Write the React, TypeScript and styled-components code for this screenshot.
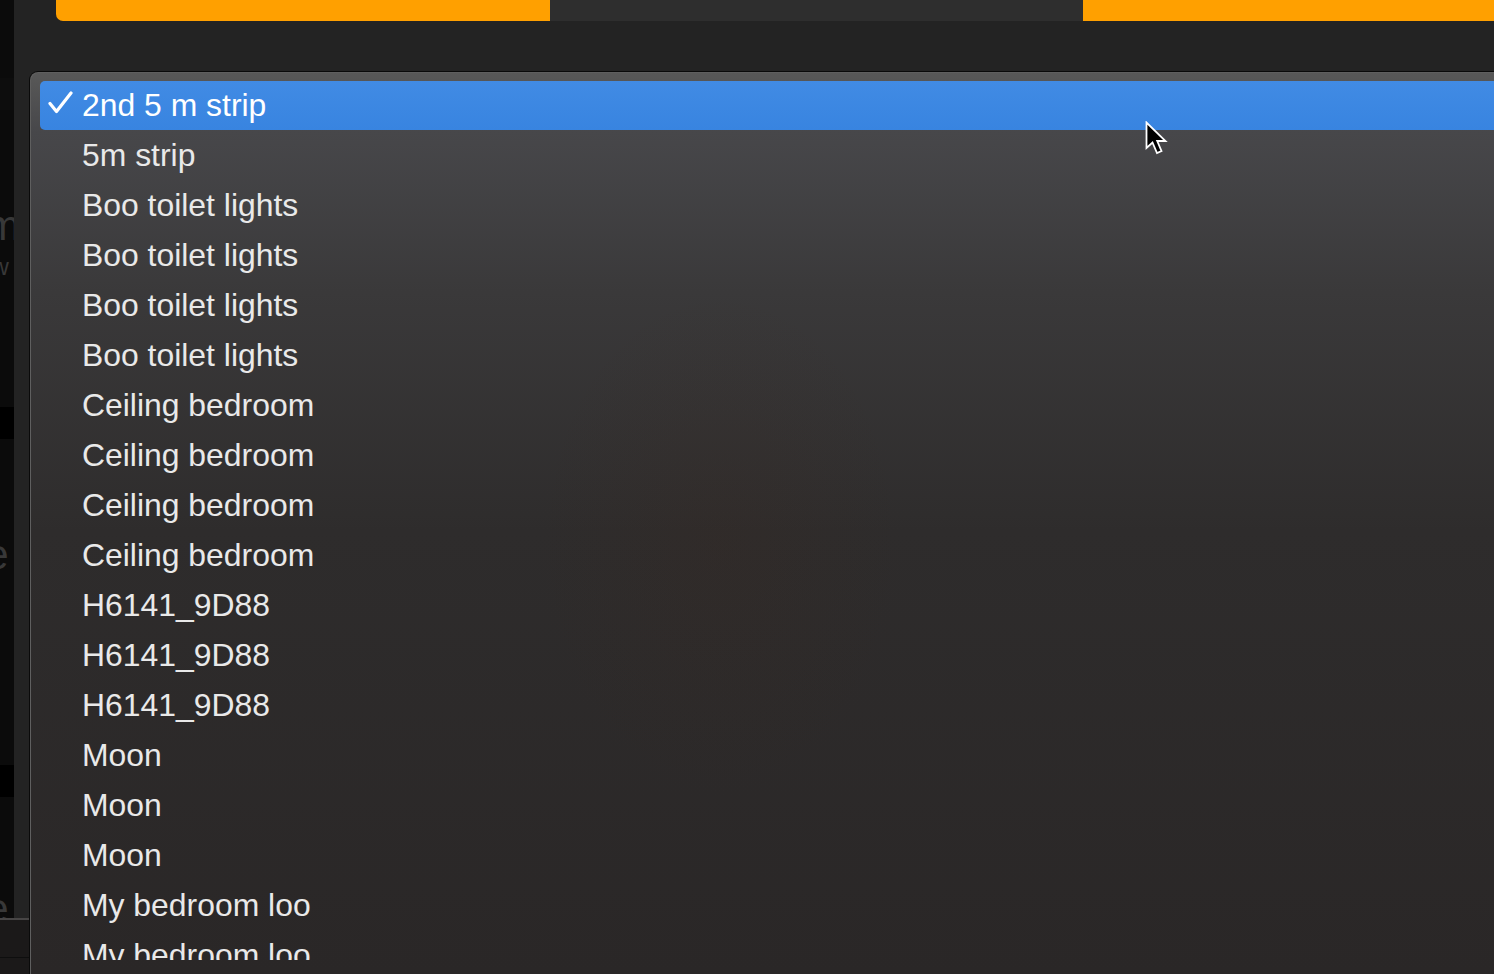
import React from "react";
import styled, { createGlobalStyle } from "styled-components";

const Global = createGlobalStyle`
  html, body { margin: 0; padding: 0; background: #232323; overflow: hidden; }
  body { font-family: "Liberation Sans", Arial, sans-serif; }
`;

const Page = styled.div`
  position: relative;
  display: flex;
  width: 1494px;
  height: 974px;
  background: #232323;
  overflow: hidden;
`;

const Rail = styled.div`
  width: 14px;
  flex: none;
  display: flex;
  flex-direction: column;
  background: #0b0b0b;
  overflow: hidden;
`;

const RailBlock = styled.div<{ $h: number; $bg: string }>`
  height: ${(p) => p.$h}px;
  flex: none;
  background: ${(p) => p.$bg};
  overflow: hidden;
  display: flex;
  align-items: center;
`;

const Ghost = styled.span<{ $size: number }>`
  font-size: ${(p) => p.$size}px;
  color: #383838;
  line-height: 1;
  margin-left: -${(p) => p.$size * 0.35}px;
`;

const Main = styled.div`
  flex: 1;
  display: flex;
  flex-direction: column;
  min-width: 0;
`;

const TopBar = styled.div`
  height: 21px;
  flex: none;
  display: grid;
  grid-template-columns: 494px 533px 1fr;
  padding-left: 42px;
`;

const Segment = styled.div<{ $on?: boolean; $first?: boolean }>`
  background: ${(p) => (p.$on ? "#ffa000" : "#2e2e2e")};
  border-bottom-left-radius: ${(p) => (p.$first ? "7px" : "0")};
`;

const Gap = styled.div`
  height: 50px;
  flex: none;
`;

const Lower = styled.div`
  flex: 1;
  display: flex;
  min-height: 0;
`;

const Gutter = styled.div`
  width: 15px;
  flex: none;
  display: flex;
  flex-direction: column;
`;

const GutterFill = styled.div`
  flex: 1;
`;

const GutterFoot = styled.div`
  height: 54px;
  flex: none;
  margin-left: -14px;
  border-top: 2px solid #474545;
  background: #1b1919;
  box-shadow: inset 0 37px 0 #1b1919, inset 0 38px 0 #0e0e0e;
`;

const Menu = styled.div`
  flex: 1;
  margin-right: -30px;
  border: 1px solid #0a0a0a;
  border-bottom: none;
  border-radius: 9px 9px 0 0;
  box-shadow: inset 1px 1px 0 #5f5f5f, inset -1px 0 0 #5f5f5f;
  background:
    radial-gradient(ellipse 260px 360px at 690px 470px, rgba(60, 40, 30, 0.18), transparent 70%),
    linear-gradient(180deg, #585858 0px, #565656 9px, #47474a 60px, #3a393a 220px, #2e2c2c 460px, #2a2727 903px);
  padding: 9px 0 0 10px;
  display: flex;
  flex-direction: column;
  overflow: hidden;
`;

const List = styled.div`
  height: 879px;
  overflow: hidden;
  display: flex;
  flex-direction: column;
`;

const Row = styled.div<{ $active?: boolean }>`
  height: ${(p) => (p.$active ? 49 : 50)}px;
  margin-bottom: ${(p) => (p.$active ? 1 : 0)}px;
  flex: none;
  display: flex;
  align-items: center;
  position: relative;
  padding-left: 42px;
  padding-bottom: 1px;
  box-sizing: border-box;
  border-radius: 5px 0 0 5px;
  background: ${(p) => (p.$active ? "linear-gradient(180deg, #418be4, #3884e0)" : "transparent")};
  color: ${(p) => (p.$active ? "#ffffff" : "#e9e9e9")};
  font-size: 31.9px;
  white-space: nowrap;
`;

const Check = styled.svg`
  position: absolute;
  left: 8px;
  top: 10px;
  width: 25px;
  height: 24px;
`;

const Pointer = styled.svg`
  position: absolute;
  left: 1145px;
  top: 121px;
  width: 24px;
  height: 38px;
`;

const items = [
  "2nd 5 m strip",
  "5m strip",
  "Boo toilet lights",
  "Boo toilet lights",
  "Boo toilet lights",
  "Boo toilet lights",
  "Ceiling bedroom",
  "Ceiling bedroom",
  "Ceiling bedroom",
  "Ceiling bedroom",
  "H6141_9D88",
  "H6141_9D88",
  "H6141_9D88",
  "Moon",
  "Moon",
  "Moon",
  "My bedroom loo",
  "My bedroom loo",
];

export default function App() {
  return (
    <>
      <Global />
      <Page>
        <Rail>
          <RailBlock $h={78} $bg="#0b0b0b" />
          <RailBlock $h={32} $bg="#0d0d0d" />
          <RailBlock $h={96} $bg="#0b0b0b" />
          <RailBlock $h={40} $bg="#0b0b0b">
            <Ghost $size={42}>m</Ghost>
          </RailBlock>
          <RailBlock $h={10} $bg="#0b0b0b" />
          <RailBlock $h={22} $bg="#0b0b0b">
            <Ghost $size={24}>w</Ghost>
          </RailBlock>
          <RailBlock $h={129} $bg="#0b0b0b" />
          <RailBlock $h={32} $bg="#000000" />
          <RailBlock $h={96} $bg="#0b0b0b" />
          <RailBlock $h={40} $bg="#0b0b0b">
            <Ghost $size={42}>e</Ghost>
          </RailBlock>
          <RailBlock $h={190} $bg="#0b0b0b" />
          <RailBlock $h={32} $bg="#000000" />
          <RailBlock $h={92} $bg="#0b0b0b" />
          <RailBlock $h={40} $bg="#0b0b0b">
            <Ghost $size={42}>e</Ghost>
          </RailBlock>
        </Rail>
        <Main>
          <TopBar>
            <Segment $on $first />
            <Segment />
            <Segment $on />
          </TopBar>
          <Gap />
          <Lower>
            <Gutter>
              <GutterFill />
              <GutterFoot />
            </Gutter>
            <Menu>
              <List>
                {items.map((t, i) => (
                  <Row key={i} $active={i === 0}>
                    {i === 0 && (
                      <Check viewBox="0 0 25 24">
                        <path
                          d="M2 12.5 L8.5 20.5 L23 2"
                          fill="none"
                          stroke="#ffffff"
                          strokeWidth="3.2"
                          strokeLinecap="round"
                          strokeLinejoin="round"
                        />
                      </Check>
                    )}
                    {t}
                  </Row>
                ))}
              </List>
            </Menu>
          </Lower>
        </Main>
        <Pointer viewBox="0 0 24 38">
          <path
            d="M1.5 1.5 L1.5 27 L7.5 21.5 L12 32 L16.5 30 L12.2 20 L20.5 20 Z"
            fill="#000000"
            stroke="#ffffff"
            strokeWidth="1.8"
            strokeLinejoin="miter"
          />
        </Pointer>
      </Page>
    </>
  );
}
